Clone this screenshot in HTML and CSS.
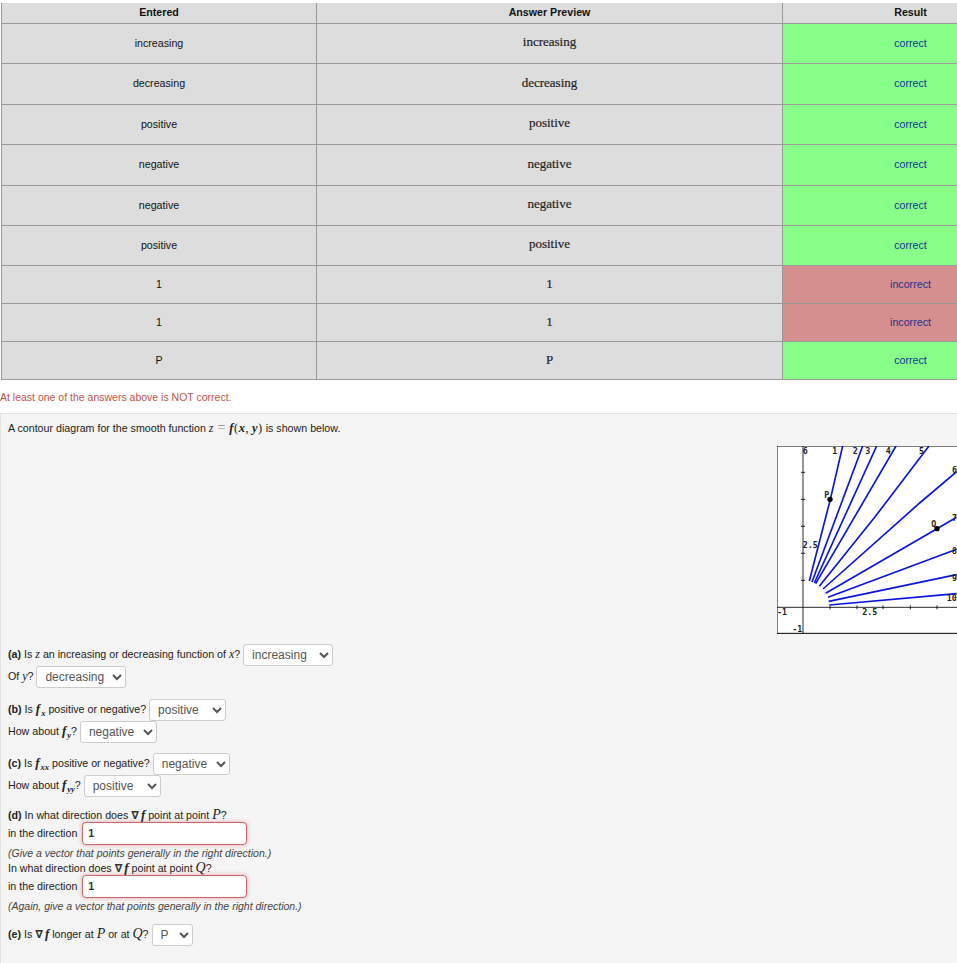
FILE: index.html
```html
<!DOCTYPE html>
<html lang="en">
<head>
<meta charset="utf-8">
<title>Contour diagram problem</title>
<link rel="stylesheet" href="styles.css">
</head>
<body>
<table class="results">
  <colgroup><col class="c1"><col class="c2"><col class="c3"></colgroup>
  <thead><tr class="h20"><th>Entered</th><th>Answer Preview</th><th>Result</th></tr></thead>
  <tbody>
    <tr class="r1"><td>increasing</td><td class="pv">increasing</td><td class="ok">correct</td></tr>
    <tr class="r2"><td>decreasing</td><td class="pv">decreasing</td><td class="ok">correct</td></tr>
    <tr class="r1"><td>positive</td><td class="pv">positive</td><td class="ok">correct</td></tr>
    <tr class="r2"><td>negative</td><td class="pv">negative</td><td class="ok">correct</td></tr>
    <tr class="r1"><td>negative</td><td class="pv">negative</td><td class="ok">correct</td></tr>
    <tr class="r3"><td>positive</td><td class="pv">positive</td><td class="ok">correct</td></tr>
    <tr class="r4"><td>1</td><td class="pv">1</td><td class="bad">incorrect</td></tr>
    <tr class="r4"><td>1</td><td class="pv">1</td><td class="bad">incorrect</td></tr>
    <tr class="r4"><td>P</td><td class="pv">P</td><td class="ok">correct</td></tr>
  </tbody>
</table>
<p class="warn">At least one of the answers above is NOT correct.</p>
<main class="problem">
  <p class="intro">A contour diagram for the smooth function <i class="m">z</i> <span class="m2">=</span> <b class="mb">f</b><span class="mb">(</span><b class="mb">x</b><span class="mb">,</span> <b class="mb">y</b><span class="mb">)</span> is shown below.</p>
  <div class="figure">
    <svg class="plot" viewBox="52 48 600 564" width="200" height="188" aria-label="Contour diagram">
      <rect x="52" y="48" width="600" height="562" fill="#fff" stroke="#000" stroke-width="3"/>
      <g class="axes">
        <path d="M130 48V610M52 532H652"/>
        <path d="M124 127h12M124 208h12M124 289h12M124 370h12M124 451h12M211 526v12M292 526v12M370 526v12M452 526v12M532 526v12"/>
      </g>
      <g class="lines">
        <path d="M149 453L212 208L249 48"/>
        <path d="M157 456L309 48"/>
        <path d="M164 459L351 48"/>
        <path d="M168 461L409 48"/>
        <path d="M179 469L345 262L508 48"/>
        <path d="M190 477L480 219L591 125"/>
        <path d="M198 490L532 296L591 262"/>
        <path d="M205 502L591 358"/>
        <path d="M207 514L591 434"/>
        <path d="M209 525L591 491"/>
      </g>
      <circle cx="211" cy="208" r="8"/>
      <circle cx="532" cy="296" r="8"/>
      <g class="labels">
        <text x="129" y="71">6</text><text x="218" y="71">1</text><text x="279" y="71">2</text><text x="317" y="71">3</text><text x="378" y="71">4</text><text x="478" y="71">5</text>
        <text x="577" y="130">6</text><text x="577" y="272">7</text><text x="577" y="372">8</text><text x="577" y="453">9</text><text x="561" y="514">10</text>
        <text x="194" y="203">P</text><text x="515" y="290">Q</text>
        <text x="129" y="354">2.5</text><text x="308" y="555">2.5</text><text x="52" y="554">-1</text><text x="98" y="606">-1</text>
      </g>
    </svg>
  </div>
  <form class="questions">
    <div class="group">
      <div class="line"><b>(a)</b> Is <i class="m">z</i> an increasing or decreasing function of <i class="m">x</i>? <select class="sel w90"><option>increasing</option><option>decreasing</option></select></div>
      <div class="line">Of <i class="m">y</i>? <select class="sel w90"><option>decreasing</option><option>increasing</option></select></div>
    </div>
    <div class="group">
      <div class="line"><b>(b)</b> Is <i class="mf">f<sub>x</sub></i> positive or negative? <select class="sel w77"><option>positive</option><option>negative</option></select></div>
      <div class="line">How about <i class="mf">f<sub>y</sub></i>? <select class="sel w77"><option>negative</option><option>positive</option></select></div>
    </div>
    <div class="group third">
      <div class="line"><b>(c)</b> Is <i class="mf">f<sub>xx</sub></i> positive or negative? <select class="sel w77"><option>negative</option><option>positive</option></select></div>
      <div class="line">How about <i class="mf">f<sub>yy</sub></i>? <select class="sel w77"><option>positive</option><option>negative</option></select></div>
    </div>
    <div class="group fourth">
      <div class="tline"><b>(d)</b> In what direction does <span class="nabla">∇</span><i class="mf">f</i> point at point <i class="mp">P</i>?</div>
      <div class="iline">in the direction <input class="inp" type="text" value="1"></div>
      <div class="note">(Give a vector that points generally in the right direction.)</div>
      <div class="tline">In what direction does <span class="nabla">∇</span><i class="mf">f</i> point at point <i class="mp">Q</i>?</div>
      <div class="iline">in the direction <input class="inp" type="text" value="1"></div>
      <div class="note">(Again, give a vector that points generally in the right direction.)</div>
    </div>
    <div class="group">
      <div class="line"><b>(e)</b> Is <span class="nabla">∇</span><i class="mf">f</i> longer at <i class="mp">P</i> or at <i class="mp">Q</i>? <select class="sel w41"><option>P</option><option>Q</option></select></div>
    </div>
  </form>
</main>
</body>
</html>
```
FILE: styles.css
```css
* { box-sizing: border-box; }
html, body { margin: 0; padding: 0; height: 963px; overflow: hidden; background: #fff; }
body { font-family: "Liberation Sans", Arial, sans-serif; font-size: 10.67px; color: #222; padding-top: 3px; }

.results { border-collapse: collapse; table-layout: fixed; width: 1037px; margin-left: 1px; }
.c1 { width: 315px; } .c2 { width: 466px; } .c3 { width: 256px; }
.results th, .results td { border: 1px solid #999; padding: 0 0 1px; text-align: center; background: #ddd; vertical-align: middle; font-size: 10.67px; }
.results th { font-weight: 700; color: #111; border-top: 0; padding-bottom: 2px; }
.results td { color: #111; }
.h20 { height: 20px; }
.r1 { height: 40px; } .r2 { height: 41px; } .r3 { height: 40px; } .r4 { height: 38px; }
.results td.pv { font-family: "Liberation Serif", serif; font-size: 13px; color: #222; -webkit-text-stroke: .2px #222; padding-bottom: 2px; }
.results .r4 td.pv { padding-bottom: 0; }
.results td.ok { background: #8f8; color: #0b3a8f; }
.results td.bad { background: #d58f8f; color: #1f3190; }

.warn { margin: 10px 0 0; height: 15px; line-height: 15px; color: #bf5448; font-size: 10.5px; }
.problem { margin-top: 8px; height: 560px; background: #f5f5f5; border-top: 1px solid #e3e3e3; border-left: 1px solid #e3e3e3; padding: 0 0 0 7px; overflow: hidden; }
.intro { margin: 6px 0 0; height: 15px; line-height: 15px; }

.figure { display: flex; justify-content: flex-end; margin: 11px -20px 0 0; height: 188px; }
.plot { display: block; flex: none; }
.axes path { fill: none; stroke: #000; stroke-width: 2.5; }
.lines path { fill: none; stroke: #0a14e0; stroke-width: 5; }
.labels text { font-family: "DejaVu Sans Mono", "Liberation Mono", monospace; font-size: 25px; font-weight: 700; fill: #222; }

.questions { margin-top: 9px; }
.group { margin-bottom: 11px; }
.group.third { margin-top: -1px; margin-bottom: 12px; }
.group.fourth { margin-bottom: 9px; }
.line { height: 22px; line-height: 22px; white-space: nowrap; }
.line b, .tline b { font-weight: 700; }
.m { font-family: "Liberation Serif", serif; font-style: italic; font-size: 12px; }
.m2 { font-family: "Liberation Serif", serif; color: #888; font-size: 14px; margin: 0 1px; }
.mb { font-family: "Liberation Serif", serif; font-style: italic; font-size: 12.5px; font-weight: 700; letter-spacing: .5px; }
span.mb { font-style: normal; font-weight: 400; }
.mf { font-family: "Liberation Serif", serif; font-style: italic; font-weight: 700; font-size: 13px; }
.mf sub { font-size: 8.5px; line-height: 0; vertical-align: -3px; margin-left: 1px; }
.mp { font-family: "Liberation Serif", serif; font-style: italic; font-size: 14px; }
.nabla { font-family: "DejaVu Sans", sans-serif; font-size: 11px; font-weight: 700; margin-right: 2px; color: #333; }

.sel { height: 22px; padding: 0 4px; vertical-align: middle; background-color: #fff; border: 1px solid #ccc; border-radius: 3px; color: #555; font-family: "Liberation Sans", Arial, sans-serif; font-size: 12px; }
.w90 { width: 90px; }
.w77 { width: 77px; }
.w41 { width: 41px; }

.tline { height: 14px; line-height: 14px; white-space: nowrap; }
.note { height: 15px; line-height: 15px; margin-top: 1px; font-style: italic; color: #444; font-size: 10.5px; white-space: nowrap; }
.iline { height: 23px; display: flex; gap: 5px; align-items: center; white-space: nowrap; }
.inp { display: block; width: 165px; height: 23px; padding: 0 5px; background: #fff; border: 1px solid #c96a6a; border-radius: 4px; box-shadow: 0 0 4px rgba(200,80,90,.5); color: #333; font-family: "Liberation Sans", Arial, sans-serif; font-size: 10.67px; font-weight: 700; }
```
